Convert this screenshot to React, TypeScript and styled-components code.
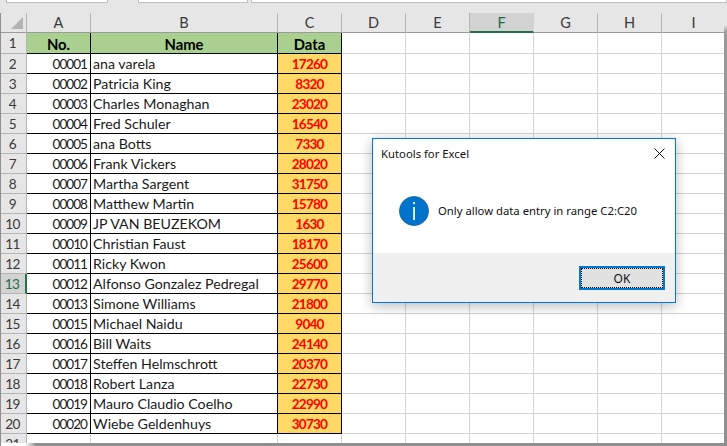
import React from "react";
import styled, { createGlobalStyle, css } from "styled-components";

const Global = createGlobalStyle`
  html, body { margin: 0; padding: 0; background: #fff; }
  #root { width: 727px; height: 446px; overflow: hidden; }
`;

const COLS = ["A", "B", "C", "D", "E", "F", "G", "H", "I"];
const TEMPLATE = "26px 64px 187px repeat(7, 64px)";

const rows: [string, string, string][] = [
  ["00001", "ana varela", "17260"],
  ["00002", "Patricia King", "8320"],
  ["00003", "Charles Monaghan", "23020"],
  ["00004", "Fred Schuler", "16540"],
  ["00005", "ana Botts", "7330"],
  ["00006", "Frank Vickers", "28020"],
  ["00007", "Martha Sargent", "31750"],
  ["00008", "Matthew Martin", "15780"],
  ["00009", "JP VAN BEUZEKOM", "1630"],
  ["00010", "Christian Faust", "18170"],
  ["00011", "Ricky Kwon", "25600"],
  ["00012", "Alfonso Gonzalez Pedregal", "29770"],
  ["00013", "Simone Williams", "21800"],
  ["00015", "Michael Naidu", "9040"],
  ["00016", "Bill Waits", "24140"],
  ["00017", "Steffen Helmschrott", "20370"],
  ["00018", "Robert Lanza", "22730"],
  ["00019", "Mauro Claudio Coelho", "22990"],
  ["00020", "Wiebe Geldenhuys", "30730"],
];

const Frame = styled.div`
  position: relative;
  width: 727px;
  height: 446px;
  box-sizing: border-box;
  padding: 0 3px 3px 1px;
  overflow: hidden;
  display: flex;
  flex-direction: column;
  font-family: "Lato", "Liberation Sans", sans-serif;
  background:
    linear-gradient(#8f8f8f, #8f8f8f) 0 0 / 1px 100% no-repeat,
    linear-gradient(to right, #fff 25px, #8f8f8f 36px) 0 100% / 100% 3px no-repeat,
    linear-gradient(#e6e6e6 0, #e6e6e6 25px, #9a9a9a 32px, #8f8f8f 100%) 100% 0 / 3px 100% no-repeat,
    #fff;
`;

const TopBar = styled.div`
  flex: none;
  height: 13px;
  margin: 0 -3px 0 -1px;
  box-sizing: border-box;
  background: #e6e6e6;
  display: flex;
  align-items: flex-start;
`;

const FieldBox = styled.div<{ $left: number; $width?: number }>`
  margin-left: ${(p) => p.$left}px;
  ${(p) => (p.$width ? `width: ${p.$width}px;` : "flex: 1;")}
  height: 2px;
  box-sizing: content-box;
  background: #fff;
  border: 1px solid #c0c0c0;
  border-top: 0;
`;

const Sheet = styled.div`
  flex: 1;
  min-height: 0;
  overflow: hidden;
  display: grid;
  grid-template-columns: ${TEMPLATE};
  grid-template-rows: 20px 21px repeat(19, 20px) 20px;
  font-size: 14.2px;
  color: #1a1a1a;
`;

const cellBase = css`
  box-sizing: border-box;
  display: flex;
  align-items: center;
  white-space: nowrap;
  overflow: hidden;
`;

const Corner = styled.div`
  ${cellBase}
  background: #e6e6e6;
  border-right: 1px solid #b5b5b5;
  border-bottom: 1px solid #9c9c9c;
  justify-content: flex-end;
  align-items: flex-end;
  padding: 0 3px 3px 0;
  svg { display: block; }
`;

const ColHead = styled.div<{ $active?: boolean }>`
  ${cellBase}
  justify-content: center;
  font-size: 14.5px;
  background: ${(p) => (p.$active ? "#d2d2d2" : "#e6e6e6")};
  color: ${(p) => (p.$active ? "#1f6b45" : "#3a3a3a")};
  border-right: 1px solid ${(p) => (p.$active ? "#d2d2d2" : "#b5b5b5")};
  border-bottom: ${(p) => (p.$active ? "2px solid #217346" : "1px solid #9c9c9c")};
`;

const RowHead = styled.div<{ $active?: boolean }>`
  ${cellBase}
  justify-content: center;
  padding: 0 2px 0 0;
  font-size: 13.6px;
  letter-spacing: -0.6px;
  background: ${(p) => (p.$active ? "#d2d2d2" : "#e6e6e6")};
  color: ${(p) => (p.$active ? "#1f6b45" : "#3a3a3a")};
  border-right: ${(p) => (p.$active ? "2px solid #217346" : "1px solid #b5b5b5")};
  border-bottom: 1px solid #b5b5b5;
`;

const Blank = styled.div`
  ${cellBase}
  border-right: 1px solid #d4d4d4;
  border-bottom: 1px solid #d4d4d4;
`;

const TitleCell = styled.div<{ $bg: string }>`
  ${cellBase}
  justify-content: center;
  padding-top: 2px;
  font-weight: 700;
  font-size: 14.8px;
  color: #000;
  background: ${(p) => p.$bg};
  border-bottom: 1px solid #000;
  border-right: 1px solid #000;
`;

const IdCell = styled.div`
  ${cellBase}
  justify-content: flex-end;
  padding: 0 3px 0 0;
  font-size: 13.6px;
  letter-spacing: -1px;
  border-right: 1px solid #000;
  border-bottom: 1px solid #000;
`;

const NameCell = styled.div`
  ${cellBase}
  padding: 0 0 0 2px;
  border-right: 1px solid #000;
  border-bottom: 1px solid #000;
`;

const ValueCell = styled.div`
  ${cellBase}
  justify-content: center;
  font-weight: 700;
  font-size: 13.6px;
  letter-spacing: -0.8px;
  color: #ff0000;
  background: #ffd966;
  border-right: 1px solid #000;
  border-bottom: 1px solid #000;
`;

const Dialog = styled.div`
  position: absolute;
  left: 372px;
  top: 138px;
  width: 304px;
  height: 165px;
  box-sizing: border-box;
  display: flex;
  flex-direction: column;
  background: #fff;
  border: 1px solid #0078d7;
  box-shadow: 0 3px 12px rgba(0, 0, 0, 0.28);
  font-family: "Noto Sans", "Open Sans", sans-serif;
  color: #111;
`;

const DialogTitle = styled.div`
  flex: none;
  height: 29px;
  display: flex;
  align-items: center;
  justify-content: space-between;
  padding: 0 10px 0 8px;
  font-size: 11.3px;
  svg { display: block; }
`;

const DialogBody = styled.div`
  flex: 1;
  display: flex;
  align-items: center;
  gap: 9px;
  padding: 0 0 0 26px;
  font-size: 11.3px;
  svg { display: block; flex: none; }
`;

const DialogFooter = styled.div`
  flex: none;
  height: 49px;
  box-sizing: border-box;
  background: #f0f0f0;
  display: flex;
  justify-content: flex-end;
  align-items: flex-start;
  padding: 13px 10px 0 0;
`;

const OkButton = styled.button`
  width: 86px;
  height: 24px;
  box-sizing: border-box;
  padding: 0;
  border: 2px solid #0078d7;
  outline: 1px dotted #000;
  outline-offset: -3px;
  background: #e1e1e1;
  color: #111;
  font-family: inherit;
  font-size: 12px;
`;

export default function App() {
  return (
    <>
      <Global />
      <Frame>
        <TopBar>
          <FieldBox $left={6} $width={100} />
          <FieldBox $left={30} $width={108} />
          <FieldBox $left={3} />
        </TopBar>
        <Sheet>
          <Corner>
            <svg width="12" height="12" viewBox="0 0 12 12">
              <path d="M12 0V12H0Z" fill="#b4b4b4" />
            </svg>
          </Corner>
          {COLS.map((c) => (
            <ColHead key={c} $active={c === "F"}>{c}</ColHead>
          ))}

          <RowHead>1</RowHead>
          <TitleCell $bg="#a9d08e">No.</TitleCell>
          <TitleCell $bg="#a9d08e">Name</TitleCell>
          <TitleCell $bg="#a9d08e">Data</TitleCell>
          {COLS.slice(3).map((c) => <Blank key={c} />)}

          {rows.map(([id, name, value], i) => (
            <React.Fragment key={id}>
              <RowHead $active={i + 2 === 13}>{i + 2}</RowHead>
              <IdCell>{id}</IdCell>
              <NameCell>{name}</NameCell>
              <ValueCell>{value}</ValueCell>
              {COLS.slice(3).map((c) => <Blank key={c} />)}
            </React.Fragment>
          ))}

          <RowHead>21</RowHead>
          {COLS.map((c) => <Blank key={c} />)}
        </Sheet>

        <Dialog>
          <DialogTitle>
            <span>Kutools for Excel</span>
            <svg width="11" height="11" viewBox="0 0 11 11">
              <path d="M0.5 0.5L10.5 10.5M10.5 0.5L0.5 10.5" stroke="#111" strokeWidth="1" fill="none" />
            </svg>
          </DialogTitle>
          <DialogBody>
            <svg width="30" height="30" viewBox="0 0 30 30">
              <circle cx="15" cy="15" r="14.6" fill="#0072c9" stroke="#1b5c96" strokeWidth="0.7" />
              <rect x="14.2" y="6" width="1.7" height="2.2" fill="#fff" />
              <rect x="14.2" y="11" width="1.7" height="13" fill="#fff" />
            </svg>
            <span>Only allow data entry in range C2:C20</span>
          </DialogBody>
          <DialogFooter>
            <OkButton>OK</OkButton>
          </DialogFooter>
        </Dialog>
      </Frame>
    </>
  );
}
